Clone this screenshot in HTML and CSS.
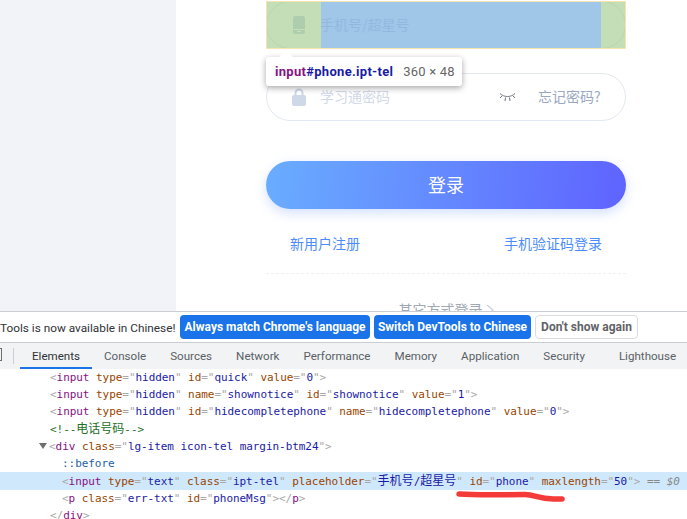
FILE: index.html
```html
<!DOCTYPE html>
<html lang="zh">
<head>
<meta charset="utf-8">
<title>DevTools</title>
<link rel="stylesheet" href="styles.css">
</head>
<body>
<div class="page">
  <section class="viewport">
    <aside class="side"></aside>
    <main class="login">
      <div class="field first">
        <svg class="ficon" width="12" height="18" viewBox="0 0 12 18"><path fill="#ced8e8" d="M2 0h8a2 2 0 0 1 2 2v14a2 2 0 0 1-2 2H2a2 2 0 0 1-2-2V2a2 2 0 0 1 2-2z"/><rect x="0" y="13" width="12" height="1" fill="#fff"/><rect x="4" y="15" width="4" height="1" fill="#fff"/></svg>
        <span class="ph">手机号/超星号</span>
      </div>
      <div class="field second">
        <svg class="ficon lock" width="14" height="18" viewBox="0 0 14 18"><path fill="none" stroke="#ced8e8" stroke-width="2" d="M3.500 8V5a3.500 3.500 0 0 1 7 0v3"/><rect x="0" y="7" width="14" height="11" rx="2" fill="#ced8e8"/></svg>
        <span class="ph">学习通密码</span>
        <svg class="eye" width="17" height="10" viewBox="0 0 17 10"><path fill="none" stroke="#70757f" stroke-width="1" d="M1 1.500c4 4 11 4 15 0M3 4 1 6M6.500 5.500 6 9M10.500 5.500 11 9M14 4l2 2"/></svg>
        <a class="forgot">忘记密码?</a>
      </div>
      <button class="submit">登录</button>
      <nav class="links"><a>新用户注册</a><a>手机验证码登录</a></nav>
      <div class="other"><span>其它方式登录</span><svg width="8" height="12" viewBox="0 0 8 12"><path d="M1 1l6 5-6 5" fill="none" stroke="#c9d0da" stroke-width="1.200"/></svg></div>
    </main>
    <div class="hl">
      <div class="hl-content"></div>
    </div>
    <div class="tip"><b class="t-tag">input</b><b class="t-id">#phone.ipt-tel</b><span class="t-size">360 × 48</span></div>
  </section>

  <section class="infobar">
    <span class="msg">Tools is now available in Chinese!</span>
    <button class="btn primary a">Always match Chrome's language</button>
    <button class="btn primary b">Switch DevTools to Chinese</button>
    <button class="btn plain">Don't show again</button>
  </section>

  <nav class="tabs">
    <span class="inspect"></span>
    <span class="sep"></span>
    <span class="tab active">Elements</span>
    <span class="tab">Console</span>
    <span class="tab">Sources</span>
    <span class="tab">Network</span>
    <span class="tab">Performance</span>
    <span class="tab">Memory</span>
    <span class="tab">Application</span>
    <span class="tab">Security</span>
    <span class="tab last">Lighthouse</span>
  </nav>

  <section class="code">
    <div class="row l1"><i>&lt;</i><u>input</u> <s>type</s><i>="</i><em>hidden</em><i>"</i> <s>id</s><i>="</i><em>quick</em><i>"</i> <s>value</s><i>="</i><em>0</em><i>"&gt;</i></div>
    <div class="row l1"><i>&lt;</i><u>input</u> <s>type</s><i>="</i><em>hidden</em><i>"</i> <s>name</s><i>="</i><em>shownotice</em><i>"</i> <s>id</s><i>="</i><em>shownotice</em><i>"</i> <s>value</s><i>="</i><em>1</em><i>"&gt;</i></div>
    <div class="row l1"><i>&lt;</i><u>input</u> <s>type</s><i>="</i><em>hidden</em><i>"</i> <s>id</s><i>="</i><em>hidecompletephone</em><i>"</i> <s>name</s><i>="</i><em>hidecompletephone</em><i>"</i> <s>value</s><i>="</i><em>0</em><i>"&gt;</i></div>
    <div class="row l1 tall"><span class="cmt">&lt;!--<span class="cjk">电话号码</span>--&gt;</span></div>
    <div class="row l1 open"><span class="arrow"></span><i>&lt;</i><u>div</u> <s>class</s><i>="</i><em>lg-item icon-tel margin-btm24</em><i>"&gt;</i></div>
    <div class="row l2"><span class="pseudo">::before</span></div>
    <div class="row l2 tall sel"><i>&lt;</i><u>input</u> <s>type</s><i>="</i><em>text</em><i>"</i> <s>class</s><i>="</i><em>ipt-tel</em><i>"</i> <s>placeholder</s><i>="</i><em><span class="cjk">手机号</span>/<span class="cjk">超星号</span></em><i>"</i> <s>id</s><i>="</i><em>phone</em><i>"</i> <s>maxlength</s><i>="</i><em>50</em><i>"&gt;</i><span class="eq"> == <span class="dollar">$0</span></span></div>
    <div class="row l2"><i>&lt;</i><u>p</u> <s>class</s><i>="</i><em>err-txt</em><i>"</i> <s>id</s><i>="</i><em>phoneMsg</em><i>"&gt;&lt;/</i><u>p</u><i>&gt;</i></div>
    <div class="row l1"><i>&lt;/</i><u>div</u><i>&gt;</i></div>
  </section>

  <svg class="scribble" width="116" height="14" viewBox="0 0 116 14"><path d="M4 4C25 5.500 50 4.500 70 4.500c10 0 14 5 30 4.500h7" fill="none" stroke="#f53a3a" stroke-width="5.500" stroke-linecap="round" stroke-linejoin="round"/></svg>
</div>
</body>
</html>
```
FILE: styles.css
```css
* { box-sizing: border-box; }
html, body { margin: 0; padding: 0; background: #fff; }
.page { position: relative; width: 687px; height: 519px; overflow: hidden; display: flex; flex-direction: column; font-family: Roboto, "Noto Sans CJK SC", sans-serif; }

.viewport { position: relative; height: 311px; flex: none; display: flex; overflow: hidden; background: #fff; }
.side { width: 176px; flex: none; background: #f1f3f8; }
.login { width: 360px; margin-left: 90px; padding-top: 1px; display: flex; flex-direction: column; font-family: "Noto Sans CJK SC", sans-serif; }
.field { height: 48px; flex: none; border: 1px solid #e3e8f2; border-radius: 24px; display: flex; align-items: center; padding-left: 25px; font-size: 14px; }
.field.second { margin-top: 24px; }
.ficon { flex: none; margin-right: 14px; }
.first .ficon { margin-left: 1px; margin-right: 15px; }
.ph { color: #d2d9e8; line-height: 20px; margin-top: -2px; }
.eye { margin-left: 109px; flex: none; }
.forgot { margin-left: 22px; margin-top: -2px; color: #9aa8bf; }
.submit { height: 48px; flex: none; margin-top: 40px; border: 0; padding: 0 0 2px; border-radius: 24px; background: linear-gradient(95deg, #69adff, #5f63ff); box-shadow: 0 4px 12px rgba(95, 140, 255, .28); color: #fff; font: 18px "Noto Sans CJK SC", sans-serif; }
.links { display: flex; justify-content: space-between; padding: 24px 24px 0; height: 65px; flex: none; border-bottom: 1px dashed #eef0f4; font-size: 14px; line-height: 20px; color: #4d8cff; }
.other { display: flex; align-items: center; justify-content: center; gap: 3px; margin-top: 25px; height: 20px; font-size: 14px; line-height: 20px; color: #a0a8b4; }
.other svg { margin-top: 2px; }

.hl { position: absolute; left: 266px; top: 1px; width: 360px; height: 48px; border: 1px solid #f6e3ad; padding: 0 24px 0 54px; background: linear-gradient(90deg, rgba(147, 196, 125, .55) 54px, transparent 54px, transparent 334px, rgba(147, 196, 125, .55) 334px); }
.hl-content { height: 100%; background: rgba(111, 168, 220, .66); }
.tip { position: absolute; left: 266px; top: 57px; width: 196px; height: 29px; background: #fff; border-radius: 3px; box-shadow: 0 2px 6px rgba(0, 0, 0, .35); padding-left: 9px; font: 13px/29px Roboto, sans-serif; white-space: nowrap; }
.tip::before { content: ""; position: absolute; left: 13px; top: -7px; border: 7px solid transparent; border-top: 0; border-bottom-color: #fff; }
.t-tag { color: #881280; letter-spacing: .3px; }
.t-id { color: #1a1aa6; letter-spacing: .3px; }
.t-size { color: #666; margin-left: 10px; letter-spacing: .2px; }

.infobar { height: 32px; flex: none; display: flex; align-items: center; border-top: 1px solid #cacdd1; border-bottom: 1px solid #cacdd1; background: #fff; font-size: 11.8px; white-space: nowrap; color: #303236; padding-top: 1px; }
.msg { width: 180px; flex: none; }
.btn { height: 24px; margin-top: -1px; border-radius: 4px; border: 0; padding: 0; font: 700 12px Roboto, sans-serif; flex: none; }
.primary { background: #1a73e8; color: #fff; }
.a { width: 190px; margin-right: 4px; }
.b { width: 157px; margin-right: 4px; }
.plain { width: 103px; background: #fff; border: 1px solid #dadce0; color: #5f6368; }

.tabs { height: 27px; flex: none; display: flex; background: #f1f3f4; border-bottom: 1px solid #cacdd1; font-size: 11.6px; line-height: 26px; color: #5a5f66; }
.inspect { width: 2px; height: 13px; margin-top: 5px; border: 1px solid #6e6e6e; border-left: 0; flex: none; }
.sep { width: 1px; height: 16px; margin: 5px 0 0 11px; background: #cacdd1; flex: none; }
.tab { flex: none; padding: 0 12px; white-space: nowrap; }
.tab.active { color: #303236; border-bottom: 2px solid #1a73e8; height: 26px; margin-left: 6px; }
.tab.last { margin-left: 10px; }

.code { flex: 1; background: #fff; font: 11px/17px "DejaVu Sans Mono", "Noto Sans CJK SC", monospace; color: #303942; overflow: hidden; letter-spacing: -.05px; margin-top: -1px; }
.row { height: 17px; white-space: pre; position: relative; }
.row.tall { height: 18px; line-height: 19px; }
.cjk { font: 12px/1 "Noto Sans CJK SC", sans-serif; letter-spacing: 0; }
.l1 { padding-left: 50px; }
.l2 { padding-left: 62px; }
.open { padding-left: 49px; }
.sel { background: #cfe8fc; }
.row i { font-style: normal; color: #a8a8a8; }
.row u { text-decoration: none; color: #881280; }
.row s { text-decoration: none; color: #994500; }
.row em { font-style: normal; color: #1a1aa6; }
.cmt { color: #236e25; }
.pseudo { color: #1a62a6; }
.eq { color: #888; }
.dollar { font-style: italic; }
.arrow { position: absolute; left: 39px; top: 5px; border: 4px solid transparent; border-top: 6px solid #6e6e6e; border-bottom: 0; }

.scribble { position: absolute; left: 455px; top: 490px; }
```
